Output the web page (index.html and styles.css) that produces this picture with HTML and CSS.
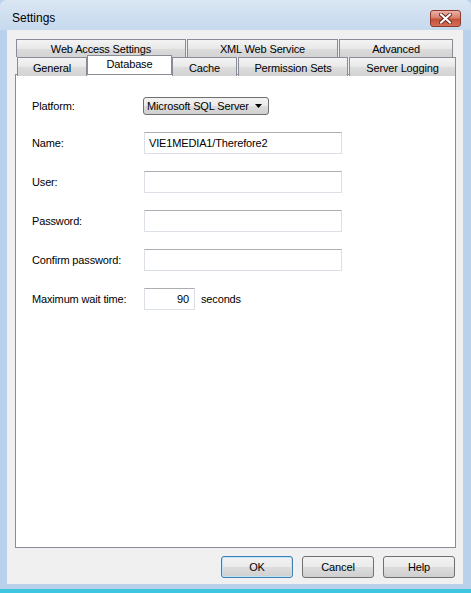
FILE: index.html
```html
<!DOCTYPE html>
<html>

<head>
	<meta charset="utf-8">
	<title>Settings</title>
	<meta name="viewport" content="width=device-width, initial-scale=1">
	<link rel="stylesheet" href="styles.css">
</head>

<body>
	<div class='window'>
		<div class='titlebar'>
			<span class='title'>Settings</span>
			<div class='close'>
				<svg width='13' height='11' viewBox='0 0 13 11'>
					<path d='M2 1.5 L11 9.5 M11 1.5 L2 9.5' stroke='#6b2a1f' stroke-width='4' stroke-linecap='square' />
					<path d='M2 1.5 L11 9.5 M11 1.5 L2 9.5' stroke='#fff' stroke-width='2' stroke-linecap='square' />
				</svg>
			</div>
		</div>

		<div class='client'>
			<div class='tabs'>
				<div class='tab-row back'>
					<div class='tab w-web'>Web Access Settings</div>
					<div class='tab w-xml'>XML Web Service</div>
					<div class='tab w-adv'>Advanced</div>
				</div>
				<div class='tab-row front'>
					<div class='tab w-gen'>General</div>
					<div class='tab w-db is-active'>Database</div>
					<div class='tab w-cache'>Cache</div>
					<div class='tab w-perm'>Permission Sets</div>
					<div class='tab w-log'>Server Logging</div>
				</div>
			</div>

			<div class='panel'>
				<div class='field'>
					<label>Platform:</label>
					<div class='select'>
						<span>Microsoft SQL Server</span>
						<svg width='7' height='4' viewBox='0 0 7 4'><path d='M0 0 H7 L3.5 4 Z' fill='#000' /></svg>
					</div>
				</div>
				<div class='field'>
					<label>Name:</label>
					<div class='input'>VIE1MEDIA1/Therefore2</div>
				</div>
				<div class='field'>
					<label>User:</label>
					<div class='input'></div>
				</div>
				<div class='field'>
					<label>Password:</label>
					<div class='input'></div>
				</div>
				<div class='field'>
					<label>Confirm password:</label>
					<div class='input'></div>
				</div>
				<div class='field'>
					<label>Maximum wait time:</label>
					<div class='input small'>90</div>
					<span class='unit'>seconds</span>
				</div>
			</div>

			<div class='buttons'>
				<div class='btn is-default'>OK</div>
				<div class='btn'>Cancel</div>
				<div class='btn'>Help</div>
			</div>
		</div>

		<div class='bottom-edge'></div>
	</div>
</body>

</html>
```

FILE: styles.css
```css
* {
	box-sizing: border-box;
}

html,
body {
	margin: 0;
	padding: 0;
}

body {
	font-family: "Liberation Sans", Arial, sans-serif;
	font-size: 11px;
	letter-spacing: -0.15px;
	color: #000;
	background-color: #fff;
}

.window {
	width: 471px;
	height: 593px;
	display: flex;
	flex-direction: column;
	background-color: #b9d1ea;
}

.titlebar {
	height: 30px;
	flex: none;
	display: flex;
	align-items: flex-start;
	justify-content: space-between;
	padding: 0 10px 0 12px;
	background: linear-gradient(#dae6f3, #c6d9ed);
	border-top-left-radius: 6px;
	border-top-right-radius: 6px;
}

.title {
	font-size: 12px;
	letter-spacing: 0;
	margin-top: 11px;
}

.close {
	width: 31px;
	height: 17px;
	margin-top: 10px;
	display: flex;
	align-items: center;
	justify-content: center;
	border: 1px solid #8a3b2e;
	border-radius: 3px;
	background: linear-gradient(#eab3a6, #d8806c 45%, #c4513a 55%, #d56f55);
}

.client {
	flex: 1;
	display: flex;
	flex-direction: column;
	margin: 0 8px 0 7px;
	padding: 9px 7px 0 8px;
	background-color: #f0f0f0;
}

/* tabs */

.tab-row {
	display: flex;
	height: 18px;
	gap: 1px;
}

.tab-row.back {
	margin-left: 1px;
}

.tab-row.front {
	margin-left: 2px;
	position: relative;
	z-index: 1;
}

.tab {
	height: 18px;
	display: flex;
	align-items: center;
	justify-content: center;
	padding-top: 1px;
	border: 1px solid #898c95;
	border-bottom: none;
	background: linear-gradient(#f4f4f4, #e8e8e8 50%, #dcdcdc 50%, #d3d3d3);
	white-space: nowrap;
}

.tab-row.front .tab {
	height: 19px;
	padding-top: 2px;
}

.tab.is-active {
	height: 22px;
	margin-top: -2px;
	padding-top: 0;
	padding-bottom: 4px;
	background: #fff;
	position: relative;
	z-index: 2;
}

.w-web { width: 170px; }
.w-xml { width: 151px; }
.w-adv { width: 114px; }
.w-gen { width: 70px; }
.w-db { width: 85px; margin-left: -1px; margin-right: -1px; }
.w-cache { width: 65px; }
.w-perm { width: 110px; }
.w-log { width: 107px; }

/* panel */

.panel {
	flex: 1;
	margin-top: -1px;
	background-color: #fff;
	border: 1px solid #898c95;
	padding: 22px 16px 0 16px;
	display: flex;
	flex-direction: column;
	gap: 17px;
}

.field {
	display: flex;
	align-items: center;
}

.field label {
	width: 112px;
	flex: none;
}

.select {
	width: 126px;
	height: 18px;
	display: flex;
	align-items: center;
	justify-content: space-between;
	padding: 0 6px 0 3px;
	margin-left: -1px;
	border: 1px solid #707070;
	border-radius: 3px;
	background: linear-gradient(#f2f2f2, #ebebeb 50%, #dddddd 50%, #cfcfcf);
}

.input {
	width: 198px;
	height: 22px;
	display: flex;
	align-items: center;
	padding: 0 4px;
	border: 1px solid #dbdfe6;
	border-top-color: #abadb3;
	background-color: #fff;
}

.input.small {
	width: 51px;
	padding-right: 5px;
	justify-content: flex-end;
}

.unit {
	margin-left: 6px;
}

/* buttons */

.buttons {
	flex: none;
	height: 36px;
	display: flex;
	justify-content: flex-end;
	gap: 9px;
	padding: 8px 1px 6px 0;
}

.btn {
	width: 72px;
	height: 22px;
	display: flex;
	align-items: center;
	justify-content: center;
	border: 1px solid #707070;
	border-radius: 3px;
	background: linear-gradient(#f2f2f2, #ebebeb 50%, #dddddd 50%, #cfcfcf);
}

.btn.is-default {
	border-color: #3c7fb1;
	box-shadow: inset 0 0 0 1px #bde4f8;
}

.bottom-edge {
	height: 9px;
	flex: none;
	border-top: 5px solid #b9d1ea;
	background-color: #3ec6e0;
}
```
